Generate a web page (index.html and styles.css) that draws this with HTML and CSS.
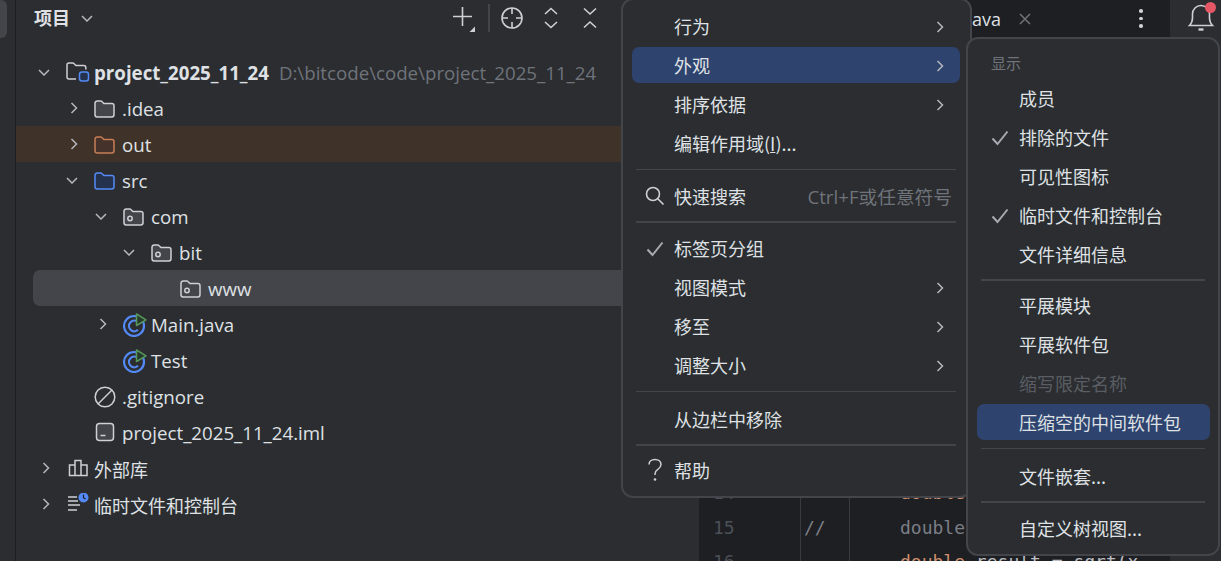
FILE: index.html
```html
<!DOCTYPE html>
<html lang="zh-CN">
<head>
<meta charset="utf-8">
<title>项目</title>
<link rel="stylesheet" href="styles.css">
</head>
<body>
<svg class="defs" width="0" height="0" aria-hidden="true">
  <symbol id="folder" viewBox="0 0 21 18"><path d="M1 3.2A2.2 2.2 0 0 1 3.2 1h3.600a1.600 1.600 0 0 1 1.100.5l2 2h7.900A2.200 2.200 0 0 1 20 5.700v9.100a2.200 2.200 0 0 1-2.200 2.200H3.200A2.200 2.200 0 0 1 1 14.800z"/></symbol>
  <symbol id="pkg" viewBox="0 0 21 18"><path d="M1 3.2A2.2 2.2 0 0 1 3.2 1h3.600a1.600 1.600 0 0 1 1.100.5l2 2h7.900A2.200 2.200 0 0 1 20 5.700v9.100a2.200 2.200 0 0 1-2.200 2.200H3.200A2.200 2.200 0 0 1 1 14.800z"/><circle cx="7" cy="10.500" r="2.200" fill="none"/></symbol>
  <symbol id="cls" viewBox="0 0 24 24"><circle class="cls-c" cx="11" cy="13" r="10"/><path class="cls-c" d="M15 16.800A5.300 5.300 0 1 1 15 9.200"/><path class="cls-p" d="M13.500 1v11.500l9.500-5.700z"/></symbol>
  <symbol id="check" viewBox="0 0 18 16"><path d="M1.500 8.500l5 5.500L16.500 1.500"/></symbol>
  <symbol id="more" viewBox="0 0 8 12"><path d="M1.500 1l5 5-5 5"/></symbol>
</svg>

<div class="rail"><div class="rail-btn"></div></div>

<section class="panel">
  <header class="panel-head">
    <span class="panel-title">项目</span>
    <svg class="chev-down title-chev" viewBox="0 0 12 7"><path d="M1 1l5 5 5-5"/></svg>
    <div class="tools">
      <svg class="tool" width="24" height="24" viewBox="0 0 24 24"><path d="M9.500 1v19M0 10.500h19"/><path class="tool-fill" d="M22 20.500v5.500h-5.500z"/></svg>
      <span class="tool-sep"></span>
      <span class="tool-cell"><svg class="tool" width="22" height="22" viewBox="0 0 22 22"><circle cx="11" cy="11" r="10"/><path d="M11 1v6M11 15v6M1 11h6M15 11h6"/></svg></span>
      <span class="tool-cell"><svg class="tool" width="16" height="22" viewBox="0 0 16 22"><path d="M2 7l6-5.500L14 7M2 15l6 5.500L14 15"/></svg></span>
      <span class="tool-cell"><svg class="tool" width="16" height="22" viewBox="0 0 16 22"><path d="M2 1.500l6 5.500 6-5.500M2 20.500L8 15l6 5.500"/></svg></span>
    </div>
  </header>

  <ul class="tree">
    <li class="row lv0">
      <span class="arrow"><svg class="chev-down" viewBox="0 0 12 7"><path d="M1 1l5 5 5-5"/></svg></span>
      <span class="ico"><svg class="i-project" width="25" height="22" viewBox="0 0 25 22"><path d="M10 17H3A2 2 0 0 1 1 15V3a2 2 0 0 1 2-2h3.800a1.600 1.600 0 0 1 1.100.5l2 2h7.900a2 2 0 0 1 2 2v2"/><rect class="i-project-b" x="13.500" y="10" width="9" height="9" rx="2.500"/></svg></span>
      <span class="name strong">project_2025_11_24</span><span class="name path">D:\bitcode\code\project_2025_11_24</span>
    </li>
    <li class="row lv1">
      <span class="arrow"><svg class="chev-right" viewBox="0 0 8 12"><path d="M1.500 1l5 5-5 5"/></svg></span>
      <span class="ico"><svg class="f f-grey" width="21" height="18"><use href="#folder"/></svg></span>
      <span class="name">.idea</span>
    </li>
    <li class="row lv1 excluded">
      <span class="arrow"><svg class="chev-right" viewBox="0 0 8 12"><path d="M1.500 1l5 5-5 5"/></svg></span>
      <span class="ico"><svg class="f f-orange" width="21" height="18"><use href="#folder"/></svg></span>
      <span class="name">out</span>
    </li>
    <li class="row lv1">
      <span class="arrow"><svg class="chev-down" viewBox="0 0 12 7"><path d="M1 1l5 5 5-5"/></svg></span>
      <span class="ico"><svg class="f f-blue" width="21" height="18"><use href="#folder"/></svg></span>
      <span class="name">src</span>
    </li>
    <li class="row lv2">
      <span class="arrow"><svg class="chev-down" viewBox="0 0 12 7"><path d="M1 1l5 5 5-5"/></svg></span>
      <span class="ico"><svg class="f f-grey" width="21" height="18"><use href="#pkg"/></svg></span>
      <span class="name">com</span>
    </li>
    <li class="row lv3">
      <span class="arrow"><svg class="chev-down" viewBox="0 0 12 7"><path d="M1 1l5 5 5-5"/></svg></span>
      <span class="ico"><svg class="f f-grey" width="21" height="18"><use href="#pkg"/></svg></span>
      <span class="name">bit</span>
    </li>
    <li class="row lv4 selected">
      <span class="arrow"></span>
      <span class="ico"><svg class="f f-grey" width="21" height="18"><use href="#pkg"/></svg></span>
      <span class="name">www</span>
    </li>
    <li class="row lv2">
      <span class="arrow"><svg class="chev-right" viewBox="0 0 8 12"><path d="M1.500 1l5 5-5 5"/></svg></span>
      <span class="ico"><svg class="i-cls" width="24" height="24"><use href="#cls"/></svg></span>
      <span class="name">Main.java</span>
    </li>
    <li class="row lv2">
      <span class="arrow"></span>
      <span class="ico"><svg class="i-cls" width="24" height="24"><use href="#cls"/></svg></span>
      <span class="name">Test</span>
    </li>
    <li class="row lv1">
      <span class="arrow"></span>
      <span class="ico"><svg class="i-line" width="22" height="22" viewBox="0 0 22 22"><circle cx="11" cy="11" r="9.800"/><path d="M4 18L18 4"/></svg></span>
      <span class="name">.gitignore</span>
    </li>
    <li class="row lv1">
      <span class="arrow"></span>
      <span class="ico"><svg class="i-iml" width="20" height="20" viewBox="0 0 20 20"><rect x="1.500" y="1.500" width="17" height="17" rx="3"/><path d="M5.500 13.500h5"/></svg></span>
      <span class="name">project_2025_11_24.iml</span>
    </li>
    <li class="row lv0">
      <span class="arrow"><svg class="chev-right" viewBox="0 0 8 12"><path d="M1.500 1l5 5-5 5"/></svg></span>
      <span class="ico"><svg class="i-lib" width="21" height="18" viewBox="0 0 21 18"><path d="M1.500 6h5.500v10.500H1.500zM7 1.500h6v15H7zM13 6h6v10.500h-6z"/></svg></span>
      <span class="name zh">外部库</span>
    </li>
    <li class="row lv0">
      <span class="arrow"><svg class="chev-right" viewBox="0 0 8 12"><path d="M1.500 1l5 5-5 5"/></svg></span>
      <span class="ico"><svg class="i-scratch" width="22" height="22" viewBox="0 0 22 22"><path d="M0 4h9M0 8h10M0 12h12M0 17h9"/><circle class="clock" cx="15.500" cy="4.500" r="5"/><path class="clock-hand" d="M15.500 1.500v3.200l2 1.300"/></svg></span>
      <span class="name zh">临时文件和控制台</span>
    </li>
  </ul>
</section>

<main class="editor">
  <div class="tabs">
    <span class="tab-name">ava</span>
    <svg class="tab-close" width="12" height="12" viewBox="0 0 12 12"><path d="M1 1l10 10M11 1L1 11"/></svg>
    <span class="tab-dots"><i></i><i></i><i></i></span>
  </div>
  <div class="code">
    <div class="line"><span class="num">14</span><span class="mark"></span><span class="src kw">double</span></div>
    <div class="line"><span class="num">15</span><span class="mark">//</span><span class="src muted">double</span></div>
    <div class="line"><span class="num">16</span><span class="mark"></span><span class="src"><span class="kw">double</span> result = sqrt(x</span></div>
  </div>
</main>

<aside class="notify">
  <svg class="bell" width="28" height="30" viewBox="0 0 28 30"><path d="M2.500 23.500c2-2 3-4 3-7.500V12a8.500 8.500 0 0 1 17 0v4c0 3.500 1 5.500 3 7.500z"/><path class="bell-clap" d="M11.500 27.500h5"/></svg>
  <span class="bell-dot"></span>
</aside>

<nav class="menu menu-main">
  <div class="item"><span class="slot"></span><span class="label">行为</span><svg class="more"><use href="#more"/></svg></div>
  <div class="item active"><span class="slot"></span><span class="label">外观</span><svg class="more"><use href="#more"/></svg></div>
  <div class="item"><span class="slot"></span><span class="label">排序依据</span><svg class="more"><use href="#more"/></svg></div>
  <div class="item"><span class="slot"></span><span class="label">编辑作用域(<u>I</u>)...</span></div>
  <div class="sep"></div>
  <div class="item"><span class="slot"><svg class="search" width="20" height="20" viewBox="0 0 20 20"><circle cx="8" cy="8" r="6.500"/><path d="M13 13l5.500 5.500"/></svg></span><span class="label">快速搜索</span><span class="hint">Ctrl+F或任意符号</span></div>
  <div class="sep thick"></div>
  <div class="item"><span class="slot"><svg class="check" width="18" height="16"><use href="#check"/></svg></span><span class="label">标签页分组</span></div>
  <div class="item"><span class="slot"></span><span class="label">视图模式</span><svg class="more"><use href="#more"/></svg></div>
  <div class="item"><span class="slot"></span><span class="label">移至</span><svg class="more"><use href="#more"/></svg></div>
  <div class="item"><span class="slot"></span><span class="label">调整大小</span><svg class="more"><use href="#more"/></svg></div>
  <div class="sep loose"></div>
  <div class="item"><span class="slot"></span><span class="label">从边栏中移除</span></div>
  <div class="sep thick tight"></div>
  <div class="item"><span class="slot"><svg class="help" width="16" height="24" viewBox="0 0 16 24"><path d="M2 6.500C2 3.500 4.500 1.500 8 1.500s6 2 6 5c0 2.500-1.500 3.600-3.200 4.800C9 12.500 8 13.500 8 16v1"/><circle class="help-dot" cx="8" cy="21.500" r="1.300"/></svg></span><span class="label">帮助</span></div>
</nav>

<nav class="menu menu-sub">
  <div class="heading">显示</div>
  <div class="item"><span class="slot"></span><span class="label">成员</span></div>
  <div class="item"><span class="slot"><svg class="check" width="18" height="16"><use href="#check"/></svg></span><span class="label">排除的文件</span></div>
  <div class="item"><span class="slot"></span><span class="label">可见性图标</span></div>
  <div class="item"><span class="slot"><svg class="check" width="18" height="16"><use href="#check"/></svg></span><span class="label">临时文件和控制台</span></div>
  <div class="item"><span class="slot"></span><span class="label">文件详细信息</span></div>
  <div class="sep thick sub-a"></div>
  <div class="item"><span class="slot"></span><span class="label">平展模块</span></div>
  <div class="item"><span class="slot"></span><span class="label">平展软件包</span></div>
  <div class="item disabled"><span class="slot"></span><span class="label">缩写限定名称</span></div>
  <div class="item active"><span class="slot"></span><span class="label">压缩空的中间软件包</span></div>
  <div class="sep sub-b"></div>
  <div class="item"><span class="slot"></span><span class="label">文件嵌套...</span></div>
  <div class="sep thick sub-c"></div>
  <div class="item"><span class="slot"></span><span class="label">自定义树视图...</span></div>
</nav>
</body>
</html>
```

FILE: styles.css
```css
* { box-sizing: border-box; }

html, body {
  margin: 0;
  height: 100%;
  overflow: hidden;
}

body {
  display: flex;
  position: relative;
  width: 1221px;
  height: 561px;
  background: #2b2d30;
  color: #dfe1e5;
  font-family: "Open Sans", "Noto Sans CJK SC", sans-serif;
  font-size: 18.700px;
}

.defs { position: absolute; }

/* left rail */
.rail {
  flex: 0 0 16px;
  border-right: 1px solid #1e1f22;
}
.rail-btn {
  width: 7px;
  height: 38px;
  background: #43454a;
  border-radius: 0 6px 6px 0;
}

/* project panel */
.panel {
  flex: 0 0 683px;
  overflow: hidden;
}
.panel-head {
  display: flex;
  align-items: center;
  height: 36px;
  padding-left: 18px;
}
.panel-title {
  font-size: 18px;
  font-weight: 600;
  line-height: 36px;
}
.title-chev { margin-left: 11px; }
.tools {
  display: flex;
  align-items: center;
  margin-left: 360px;
}
.tool {
  fill: none;
  stroke: #ced0d6;
  stroke-width: 1.600;
  overflow: visible;
  flex: none;
}
.tool-fill { fill: #ced0d6; stroke: none; }
.tool-sep {
  width: 2px;
  height: 28px;
  margin: 0 2.500px 0 11px;
  background: #43454a;
}
.tool-cell {
  flex: 0 0 39px;
  display: flex;
  justify-content: center;
}

/* tree */
.tree {
  list-style: none;
  margin: 18px 0 0;
  padding: 0;
}
.row {
  display: flex;
  align-items: center;
  height: 36px;
  white-space: nowrap;
}
.lv0 { padding-left: 22px; }
.lv1 { padding-left: 50px; }
.lv2 { padding-left: 79px; }
.lv3 { padding-left: 107px; }
.lv4 { padding-left: 136px; }
.excluded { background: #3f3228; }
.selected {
  background: #43454a;
  margin-left: 17px;
  padding-left: 119px;
  border-radius: 7px 0 0 7px;
}
.arrow {
  flex: 0 0 28px;
  display: flex;
  align-items: center;
}
.ico {
  flex: 0 0 28px;
  display: flex;
  align-items: center;
}
.chev-down {
  width: 12px;
  height: 7px;
  fill: none;
  stroke: #b4b8bf;
  stroke-width: 1.500;
  flex: none;
}
.chev-right {
  width: 8px;
  height: 12px;
  margin-left: 4px;
  fill: none;
  stroke: #b4b8bf;
  stroke-width: 1.500;
}
.name { line-height: 34px; padding-top: 2px; color: #dfe1e5; }
.strong { font-weight: 700; }
.zh { font-size: 18px; font-family: "Noto Sans CJK SC", sans-serif; }
.path { margin-left: 10px; color: #6f737a; }

.f { stroke-width: 1.500; flex: none; margin-top: 1px; }
.f-grey { fill: #43454a; stroke: #ced0d6; }
.f-orange { fill: #45322b; stroke: #c77d55; }
.f-blue { fill: #25324d; stroke: #548af7; }

.i-project { fill: none; stroke: #ced0d6; stroke-width: 1.500; margin-top: 2px; }
.i-project-b { stroke: #548af7; fill: #25324d; }
.i-cls { flex: none; margin-top: 2px; }
.cls-c { fill: none; stroke: #548af7; stroke-width: 2.200; }
.cls-p { fill: #263a29; stroke: #57965c; stroke-width: 1.500; stroke-linejoin: round; }
.i-line { fill: none; stroke: #ced0d6; stroke-width: 1.500; flex: none; margin-top: 1px; }
.i-lib { fill: none; stroke: #ced0d6; stroke-width: 1.500; flex: none; margin-left: 2px; }
.i-iml { fill: #43454a; stroke: #ced0d6; stroke-width: 1.500; margin-left: 1px; }
.i-scratch { fill: none; stroke: #ced0d6; stroke-width: 1.500; flex: none; margin-left: 2px; }
.clock { fill: #548af7; stroke: none; }
.clock-hand { stroke: #1e1f22; stroke-width: 1.200; }

/* editor */
.editor {
  flex: 0 0 471px;
  background: #1e1f22;
  overflow: hidden;
}
.tabs {
  display: flex;
  align-items: center;
  height: 37px;
  padding-left: 273px;
}
.tab-name { font-size: 18px; color: #dfe1e5; }
.tab-close { margin-left: 18px; stroke: #6f737a; stroke-width: 1.500; fill: none; }
.tab-dots {
  display: flex;
  flex-direction: column;
  gap: 4px;
  margin-left: 108px;
}
.tab-dots i {
  display: block;
  width: 3.500px;
  height: 3.500px;
  border-radius: 50%;
  background: #ced0d6;
}
.code {
  padding-top: 439px;
  font-family: "DejaVu Sans Mono", "Liberation Mono", monospace;
  font-size: 18px;
  white-space: nowrap;
}
.line {
  display: flex;
  height: 34.500px;
  line-height: 34.500px;
  color: #bcbec4;
}
.num {
  flex: 0 0 102px;
  padding-left: 14px;
  color: #4b5059;
  border-right: 1px solid #393b40;
}
.mark {
  flex: 0 0 49px;
  padding-left: 3px;
  color: #7a7e85;
  border-right: 1px solid #393b40;
}
.src { padding-left: 50px; }
.kw { color: #cf8e6d; }
.muted { color: #7a7e85; }

/* right strip */
.notify {
  flex: 1 1 auto;
  position: relative;
  padding: 2px 0 0 17px;
}
.bell { fill: none; stroke: #ced0d6; stroke-width: 1.600; display: block; }
.bell-clap { stroke-width: 2.400; }
.bell-dot {
  position: absolute;
  left: 35px;
  top: 2px;
  width: 11px;
  height: 11px;
  border-radius: 50%;
  background: #e55765;
}

/* popup menus */
.menu {
  position: absolute;
  display: flex;
  flex-direction: column;
  gap: 3px;
  background: #2b2d30;
  border: 2px solid #43454a;
  border-radius: 12px;
  font-size: 18px;
  font-family: "Noto Sans CJK SC", "Open Sans", sans-serif;
}
.menu-main {
  left: 621px;
  top: -2px;
  width: 351px;
  padding: 8px 10px 8px 9px;
}
.menu-sub {
  left: 966px;
  top: 37px;
  width: 254px;
  padding: 7px 8px 8px 9px;
}
.item {
  display: flex;
  align-items: center;
  flex: none;
  height: 36px;
  padding-left: 14px;
  border-radius: 7px;
  color: #dfe1e5;
  line-height: 39px;
  white-space: nowrap;
}
.active { background: #2e436e; }
.disabled { color: #5a5d63; }
.slot {
  flex: 0 0 28px;
  display: flex;
  align-items: center;
}
.label { flex: 1 1 auto; }
.more {
  flex: none;
  width: 8px;
  height: 12px;
  margin-right: 16px;
  margin-top: 2px;
  fill: none;
  stroke: #b4b8bf;
  stroke-width: 1.500;
}
.hint {
  flex: none;
  margin-right: 8px;
  color: #6f737a;
  font-family: "Open Sans", "Noto Sans CJK SC", sans-serif;
  font-size: 18.700px;
}
.check { fill: none; stroke: #a8abb2; stroke-width: 2; margin-top: 2px; }
.search { fill: none; stroke: #ced0d6; stroke-width: 1.600; margin-left: -1px; }
.help { fill: none; stroke: #ced0d6; stroke-width: 1.500; margin-left: 1px; }
.help-dot { fill: #ced0d6; stroke: none; }
.heading {
  flex: none;
  height: 31px;
  padding-left: 14px;
  font-size: 15px;
  line-height: 34px;
  color: #6f737a;
}
.sep {
  flex: none;
  height: 1px;
  margin: 5px 4px;
  background: #43454a;
}
.thick { height: 2px; margin-top: 4px; margin-bottom: 4px; }
.loose { margin-bottom: 6px; }
.tight { margin-bottom: 3px; }
.menu-sub .sep { margin-left: 4px; margin-right: 5px; }
.menu-sub .sub-a { margin-top: 4px; margin-bottom: 3px; }
.menu-sub .sub-b { margin-top: 5px; margin-bottom: 6px; }
.menu-sub .sub-c { margin-top: 4px; margin-bottom: 4px; }
```
